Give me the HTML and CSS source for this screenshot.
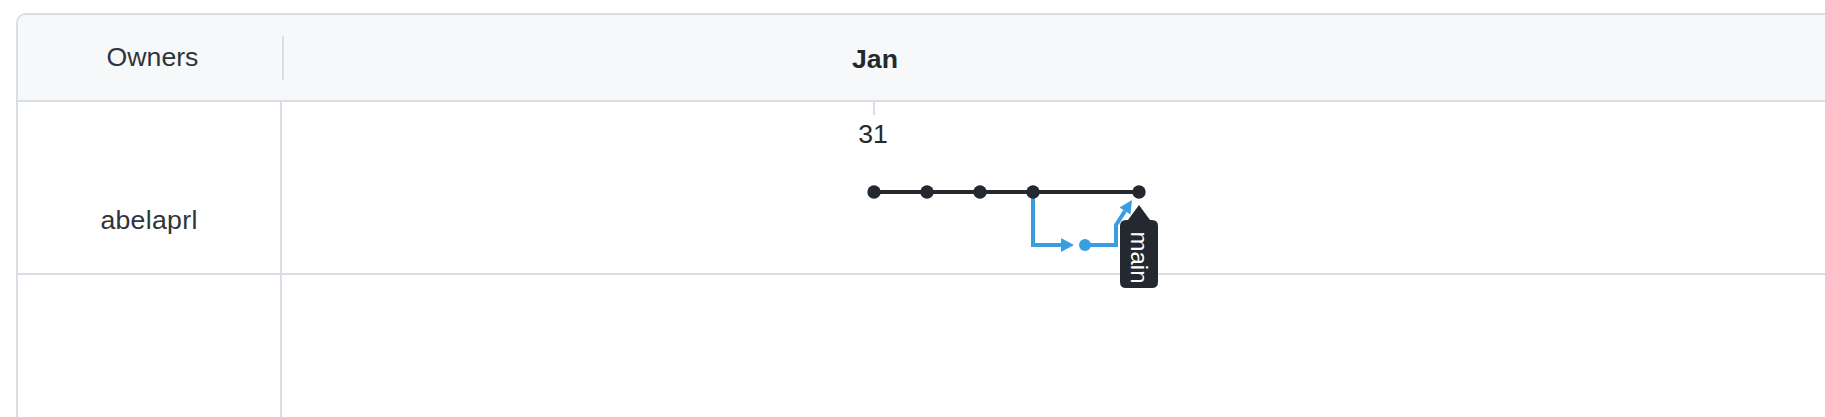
FILE: index.html
```html
<!DOCTYPE html>
<html>
<head>
<meta charset="utf-8">
<link rel="stylesheet" href="styles.css">
</head>
<body>
<div class="board">
  <div class="head">
    <div class="head-owner">Owners</div>
    <div class="head-sep"></div>
    <div class="head-time"><div class="month">Jan</div></div>
  </div>
  <div class="row row-first">
    <div class="owner">abelaprl</div>
    <div class="timeline">
      <svg class="graph" width="1000" height="171" viewBox="0 0 1000 171">
        <line x1="592" y1="0" x2="592" y2="13" stroke="#d8dee4" stroke-width="2"/>
        <text x="591" y="41" text-anchor="middle" font-family="Liberation Sans, Arial, sans-serif" font-size="26.67" fill="#24292f">31</text>
        <line x1="592" y1="90" x2="857" y2="90" stroke="#24292f" stroke-width="4"/>
        <polyline points="751,90 751,143 781,143" fill="none" stroke="#399ee0" stroke-width="4"/>
        <polygon points="792,143 779,136 779,150" fill="#399ee0"/>
        <circle cx="803" cy="143" r="6" fill="#399ee0"/>
        <polyline points="803,143 834,143 834,123 843,109" fill="none" stroke="#399ee0" stroke-width="4" stroke-linejoin="miter"/>
        <polygon points="850,98 848.5,112.4 837.5,105.4" fill="#399ee0"/>
        <circle cx="592" cy="90" r="6.7" fill="#24292f"/>
        <circle cx="645" cy="90" r="6.7" fill="#24292f"/>
        <circle cx="698" cy="90" r="6.7" fill="#24292f"/>
        <circle cx="751" cy="90" r="6.7" fill="#24292f"/>
        <circle cx="857" cy="90" r="6.7" fill="#24292f"/>
        <path d="M857 103 L868 118 L870 118 Q876 118 876 124 L876 180 Q876 186 870 186 L844 186 Q838 186 838 180 L838 124 Q838 118 844 118 L846 118 Z" fill="#24292f"/>
        <text transform="translate(857,155.5) rotate(90)" text-anchor="middle" dominant-baseline="central" font-family="Liberation Sans, Arial, sans-serif" font-size="24" fill="#ffffff">main</text>
      </svg>
    </div>
  </div>
  <div class="row row-second">
    <div class="owner"></div>
    <div class="timeline"></div>
  </div>
</div>
</body>
</html>
```

FILE: styles.css
```css
html, body {
  margin: 0;
  padding: 0;
  background: #ffffff;
  overflow: hidden;
}

body {
  font-family: "Liberation Sans", Arial, sans-serif;
  color: #24292f;
  width: 1825px;
  height: 417px;
}

.board {
  margin: 13px 0 0 16px;
  width: calc(100% - 16px);
  border-top: 2px solid #d8dee4;
  border-left: 2px solid #d8dee4;
  border-top-left-radius: 10px;
  box-sizing: border-box;
}

.head {
  display: flex;
  align-items: center;
  height: 85px;
  background: #f6f8fa;
  border-bottom: 2px solid #d8dee4;
  border-top-left-radius: 8px;
}

.head-owner {
  width: 264px;
  padding-left: 5px;
  box-sizing: border-box;
  text-align: center;
  font-size: 26.67px;
  color: #2f343a;
}

.head-sep {
  width: 2px;
  height: 44px;
  background: #d8dee4;
}

.head-time {
  flex: 1;
}

.month {
  width: 100px;
  margin-left: 541px;
  padding-top: 3px;
  text-align: center;
  font-size: 26.67px;
  font-weight: bold;
  color: #24292f;
}

.row {
  display: grid;
  grid-template-columns: 264px 1fr;
}

.row-first {
  height: 171px;
  border-bottom: 2px solid #d8dee4;
}

.row-second {
  height: 142px;
}

.owner {
  border-right: 2px solid #d8dee4;
  text-align: center;
  font-size: 26.67px;
  letter-spacing: 0.3px;
  color: #2f343a;
}

.row-first .owner {
  padding-top: 103px;
  box-sizing: border-box;
}

.timeline {
  min-width: 0;
}

.graph {
  display: block;
  overflow: visible;
}
```
